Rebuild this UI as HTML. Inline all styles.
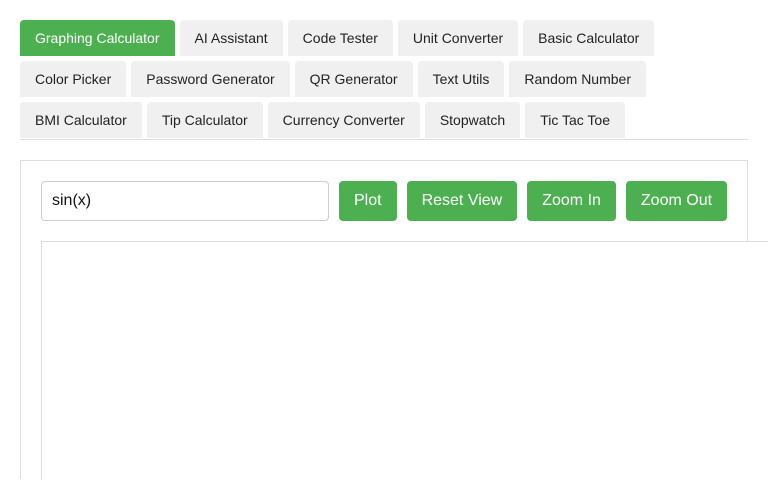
<!DOCTYPE html>
<html style="height:480px;overflow:hidden"><head><style>
body{margin:0;background:#fff;font-family:"Liberation Sans",Arial,sans-serif;width:768px;height:480px;overflow:hidden;position:relative}
.tabs{position:absolute;left:20px;top:20px;width:728px;border-bottom:1px solid #ddd;height:119px}
.row{display:flex;gap:5px;margin-bottom:5px;height:36px}
.tab{background:#f0f0f0;color:#222;font-size:14px;line-height:36px;padding:0 15px;border-radius:4px 4px 0 0;white-space:nowrap}
.tab.a{background:#4caf50;color:#fff}
.panel{position:absolute;left:20px;top:160px;width:726px;height:318px;border:1px solid #ddd;border-bottom:none}
.inp{position:absolute;left:20px;top:20px;width:276px;height:38px;border:1px solid #ccc;border-radius:4px;font-size:16px;line-height:38px;padding-left:10px;color:#111}
.btns{position:absolute;left:318px;top:20px;display:flex;gap:10px}
.btn{background:#4caf50;color:#fff;font-size:16px;height:40px;line-height:40px;padding:0 15px;border-radius:4px}
.canvas{position:absolute;left:20px;top:80px;width:760px;height:238px;border-top:1px solid #ddd;border-left:1px solid #ddd;background:#fff}
</style></head><body>
<div class="tabs">
<div class="row"><div class="tab a">Graphing Calculator</div><div class="tab">AI Assistant</div><div class="tab">Code Tester</div><div class="tab">Unit Converter</div><div class="tab">Basic Calculator</div></div>
<div class="row"><div class="tab">Color Picker</div><div class="tab">Password Generator</div><div class="tab">QR Generator</div><div class="tab">Text Utils</div><div class="tab">Random Number</div></div>
<div class="row"><div class="tab">BMI Calculator</div><div class="tab">Tip Calculator</div><div class="tab">Currency Converter</div><div class="tab">Stopwatch</div><div class="tab">Tic Tac Toe</div></div>
</div>
<div class="panel">
<div class="inp">sin(x)</div>
<div class="btns"><div class="btn">Plot</div><div class="btn">Reset View</div><div class="btn">Zoom In</div><div class="btn">Zoom Out</div></div>
<div class="canvas"></div>
</div>
</body></html>
